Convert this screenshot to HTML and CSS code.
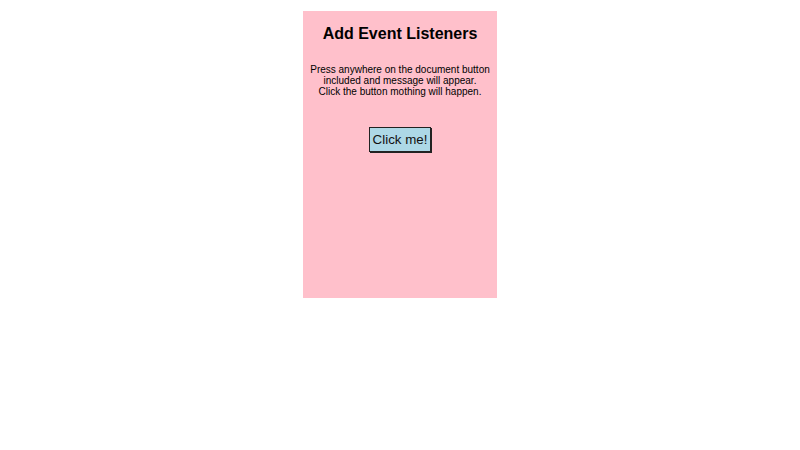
FILE: index.html
```html
<!DOCTYPE html>
<html lang="en">
<head>
    <meta charset="UTF-8">
    <title>Add Event Listeners</title>
    <link rel="stylesheet" href="styles.css">
</head>
<body>
    <div class="container">
        <h1>Add Event Listeners</h1>
        <p class="texto">Press anywhere on the document button included and message will appear.<br>Click the button mothing will happen.</p>
        <button id="btn">Click me!</button>
    </div>
</body>
</html>
```

FILE: styles.css
```css
body {
    margin: 0;
    font-family: "Liberation Sans", Arial, sans-serif;
    background: white;
}
.container {
    width: 194px;
    height: 287px;
    margin: 11px auto 0;
    background: pink;
    text-align: center;
    box-sizing: border-box;
    padding: 14px 5px 0;
}
h1 {
    font-size: 16px;
    margin: 0 0 21px;
}
.texto {
    font-size: 10px;
    margin: 0 0 30px;
}
button {
    background: lightblue;
    font-family: "Liberation Sans", Arial, sans-serif;
    font-size: 13.33px;
    padding: 4px 3px 4px;
    border: 1px solid #222;
    box-shadow: 1px 1px 0 #222;
    color: #111;
}
```
